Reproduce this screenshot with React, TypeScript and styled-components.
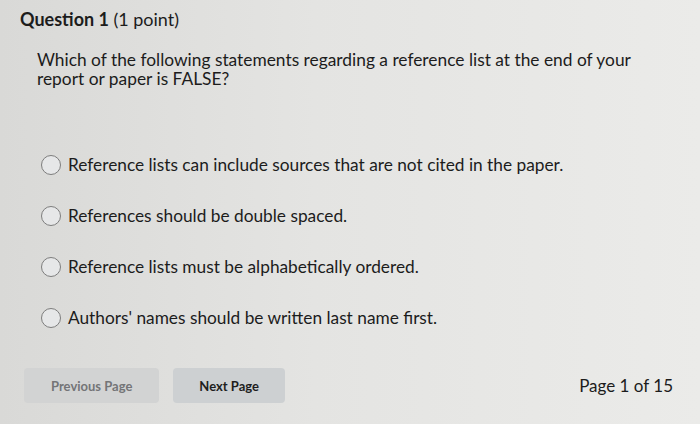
import React from 'react';
import styled, { createGlobalStyle } from 'styled-components';

const GlobalStyle = createGlobalStyle`
  html, body {
    margin: 0;
    padding: 0;
  }
  body {
    font-family: Lato, 'Open Sans', sans-serif;
    color: #1c1c1c;
    background: #e3e3e1;
  }
`;

const options = [
  'Reference lists can include sources that are not cited in the paper.',
  'References should be double spaced.',
  'Reference lists must be alphabetically ordered.',
  "Authors' names should be written last name first.",
];

const Page = styled.div`
  width: 700px;
  height: 424px;
  box-sizing: border-box;
  padding: 8px 27px 0 20px;
  display: flex;
  flex-direction: column;
  background: linear-gradient(90deg, #d9d9d7 0%, #e4e4e2 45%, #ebebe9 100%);
  overflow: hidden;
`;

const Title = styled.h1`
  margin: 0;
  font-size: 18px;
  line-height: 22px;
  font-weight: 700;
  span {
    font-weight: 400;
  }
`;

const Body = styled.div`
  padding-left: 17px;
  margin-top: 20px;
`;

const Prompt = styled.p`
  margin: 0;
  font-size: 17.35px;
  line-height: 19px;
  width: 630px;
`;

const OptionList = styled.div`
  margin-top: 66px;
  display: flex;
  flex-direction: column;
  gap: 30px;
`;

const OptionRow = styled.label`
  display: flex;
  align-items: center;
  gap: 7px;
  font-size: 17.3px;
  line-height: 21px;
  cursor: pointer;
`;

const Radio = styled.span`
  width: 20px;
  height: 20px;
  margin-left: 4px;
  border: 1.5px solid #7d7d7d;
  border-radius: 50%;
  box-sizing: border-box;
  background: #e6e7e8;
  flex: none;
`;

const Footer = styled.div`
  margin-top: 40px;
  padding-left: 4px;
  display: flex;
  align-items: center;
  gap: 14px;
`;

const NavButton = styled.button<{ $disabled?: boolean }>`
  height: 35px;
  padding: 0 ${(p) => (p.$disabled ? '27px' : '26px')};
  border: none;
  border-radius: 4px;
  font-family: Lato, 'Open Sans', sans-serif;
  font-size: 13px;
  font-weight: 700;
  background: ${(p) => (p.$disabled ? '#d2d3d3' : '#cdd0d2')};
  color: ${(p) => (p.$disabled ? '#747577' : '#1e1e1e')};
  cursor: ${(p) => (p.$disabled ? 'default' : 'pointer')};
`;

const PageCount = styled.div`
  margin-left: auto;
  font-size: 17px;
`;

export default function App() {
  return (
    <>
      <GlobalStyle />
      <Page>
        <Title>
          Question 1 <span>(1 point)</span>
        </Title>
        <Body>
          <Prompt>
            Which of the following statements regarding a reference list at the end of your report or
            paper is FALSE?
          </Prompt>
          <OptionList>
            {options.map((o) => (
              <OptionRow key={o}>
                <Radio />
                {o}
              </OptionRow>
            ))}
          </OptionList>
        </Body>
        <Footer>
          <NavButton $disabled>Previous Page</NavButton>
          <NavButton>Next Page</NavButton>
          <PageCount>Page 1 of 15</PageCount>
        </Footer>
      </Page>
    </>
  );
}
